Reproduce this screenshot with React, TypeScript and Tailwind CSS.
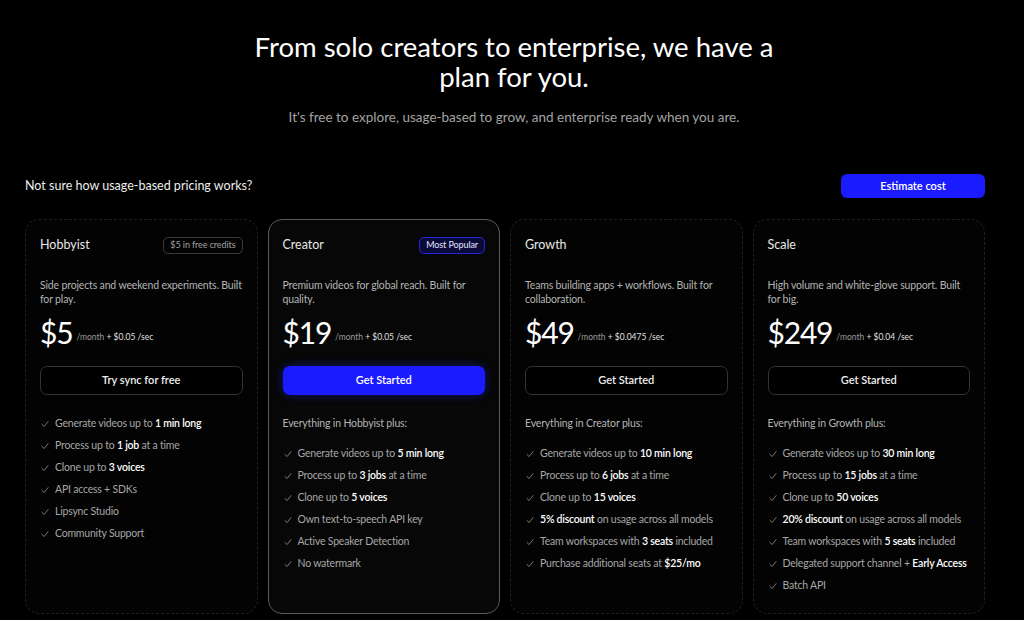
import React from "react";

type Feature = React.ReactNode;

type Plan = {
  name: string;
  badge?: { text: string; popular?: boolean };
  desc: string;
  price: string;
  rate: string;
  cta: string;
  primary?: boolean;
  featured?: boolean;
  intro?: string;
  features: Feature[];
};

const B = ({ children }: { children: React.ReactNode }) => (
  <span className="font-semibold text-white">{children}</span>
);

const plans: Plan[] = [
  {
    name: "Hobbyist",
    badge: { text: "$5 in free credits" },
    desc: "Side projects and weekend experiments. Built for play.",
    price: "$5",
    rate: "$0.05 /sec",
    cta: "Try sync for free",
    features: [
      <>Generate videos up to <B>1 min long</B></>,
      <>Process up to <B>1 job</B> at a time</>,
      <>Clone up to <B>3 voices</B></>,
      <>API access + SDKs</>,
      <>Lipsync Studio</>,
      <>Community Support</>,
    ],
  },
  {
    name: "Creator",
    badge: { text: "Most Popular", popular: true },
    desc: "Premium videos for global reach. Built for quality.",
    price: "$19",
    rate: "$0.05 /sec",
    cta: "Get Started",
    primary: true,
    featured: true,
    intro: "Everything in Hobbyist plus:",
    features: [
      <>Generate videos up to <B>5 min long</B></>,
      <>Process up to <B>3 jobs</B> at a time</>,
      <>Clone up to <B>5 voices</B></>,
      <>Own text-to-speech API key</>,
      <>Active Speaker Detection</>,
      <>No watermark</>,
    ],
  },
  {
    name: "Growth",
    desc: "Teams building apps + workflows. Built for collaboration.",
    price: "$49",
    rate: "$0.0475 /sec",
    cta: "Get Started",
    intro: "Everything in Creator plus:",
    features: [
      <>Generate videos up to <B>10 min long</B></>,
      <>Process up to <B>6 jobs</B> at a time</>,
      <>Clone up to <B>15 voices</B></>,
      <><B>5% discount</B> on usage across all models</>,
      <>Team workspaces with <B>3 seats</B> included</>,
      <>Purchase additional seats at <B>$25/mo</B></>,
    ],
  },
  {
    name: "Scale",
    desc: "High volume and white-glove support. Built for big.",
    price: "$249",
    rate: "$0.04 /sec",
    cta: "Get Started",
    intro: "Everything in Growth plus:",
    features: [
      <>Generate videos up to <B>30 min long</B></>,
      <>Process up to <B>15 jobs</B> at a time</>,
      <>Clone up to <B>50 voices</B></>,
      <><B>20% discount</B> on usage across all models</>,
      <>Team workspaces with <B>5 seats</B> included</>,
      <>Delegated support channel + <B>Early Access</B></>,
      <>Batch API</>,
    ],
  },
];

const Check = () => (
  <svg width="8" height="8" viewBox="0 0 10 10" fill="none" className="shrink-0">
    <polyline points="1.2,5.6 3.9,8.2 8.8,2" stroke="#8a8a8a" strokeWidth="1.1" strokeLinecap="round" strokeLinejoin="round" />
  </svg>
);

function Card({ p }: { p: Plan }) {
  return (
    <div
      className={
        "rounded-[14px] px-[14px] pt-4 pb-4 " +
        (p.featured
          ? "border border-[#5a5a5a] bg-[#070707]"
          : "border border-dashed border-[#1f1f1f] bg-[#030303]")
      }
    >
      <div className="flex items-center justify-between h-[18px]">
        <span className="text-[12.5px] text-[#e8e8e8]">{p.name}</span>
        {p.badge && (
          <span
            className={
              "rounded-[5px] border px-[6px] h-[17px] flex items-center text-[9px] tracking-[-0.01em] " +
              (p.badge.popular
                ? "border-[#2626d6] bg-[#0b0b3a] text-[#e5e5ff]"
                : "border-[#3a3a3a] text-[#a0a0a0]")
            }
          >
            {p.badge.text}
          </span>
        )}
      </div>
      <p className="mt-[24px] text-[10.5px] leading-[14px] tracking-[-0.015em] text-[#b4b4b4]">{p.desc}</p>
      <div className="mt-[8px] flex items-end h-[36px]">
        <span className="text-[30px] leading-[36px] text-white tracking-[-0.04em]">{p.price}</span>
        <span className="ml-[4px] mb-[6px] text-[8.5px] text-[#9a9a9a]">
          /month <span className="text-[#e0e0e0]">+ {p.rate}</span>
        </span>
      </div>
      <button
        className={
          "mt-[16px] w-full h-[29px] rounded-[7px] text-[11px] font-semibold flex items-center justify-center " +
          (p.primary
            ? "bg-[#1b1bff] text-white shadow-[0_0_10px_rgba(40,40,255,0.45)]"
            : "border border-[#333333] bg-black text-[#eeeeee]")
        }
      >
        {p.cta}
      </button>
      <div className="mt-[18px]">
        {p.intro && (
          <div className="h-[22px] flex items-center text-[10.5px] tracking-[-0.015em] text-[#b4b4b4] mb-[8px]">{p.intro}</div>
        )}
        {p.features.map((f, i) => (
          <div
            key={i}
            className="h-[22px] flex items-center gap-[6px] pl-[1px] text-[10.5px] tracking-[-0.02em] text-[#a6a6a6] whitespace-nowrap"
          >
            <Check />
            <span>{f}</span>
          </div>
        ))}
      </div>
    </div>
  );
}

export default function App() {
  return (
    <div
      className="w-[1024px] h-[620px] bg-black overflow-hidden text-white"
      style={{ fontFamily: "Lato, 'Noto Sans', sans-serif" }}
    >
      <div className="pt-[32px] pl-[4px]">
        <h1 className="text-center text-[27.5px] leading-[30px] text-white font-normal">
          From solo creators to enterprise, we have a
          <br />
          plan for you.
        </h1>
        <p className="mt-[15px] text-center text-[13.5px] leading-[20px] text-[#a3a3a3]">
          It's free to explore, usage-based to grow, and enterprise ready when you are.
        </p>
      </div>
      <div className="w-[960px] ml-[25px]">
        <div className="mt-[47px] flex items-center justify-between h-[24px]">
          <span className="text-[12.5px] text-[#ededed]">Not sure how usage-based pricing works?</span>
          <button className="w-[144px] h-[24px] rounded-[6px] bg-[#1b1bff] text-[11px] font-semibold text-white">
            Estimate cost
          </button>
        </div>
        <div className="mt-[21px] grid grid-cols-4 gap-[10px] h-[389px]">
          {plans.map((p) => (
            <Card key={p.name} p={p} />
          ))}
        </div>
      </div>
    </div>
  );
}
